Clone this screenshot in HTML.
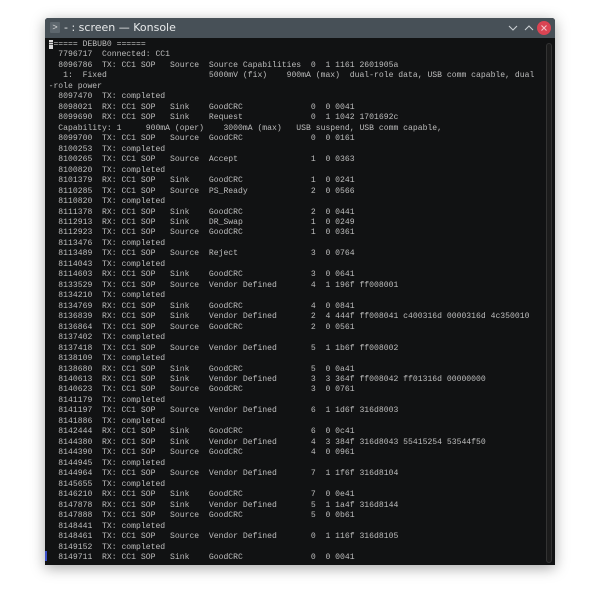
<!DOCTYPE html>
<html><head><meta charset="utf-8"><style>
html,body{margin:0;padding:0;width:600px;height:600px;background:#fff;overflow:hidden}
.win{position:absolute;left:45px;top:18px;width:510px;height:547px;background:#111213;box-shadow:0 3px 14px rgba(0,0,0,.35);border-radius:3px 3px 0 0;overflow:hidden}
.tb{position:absolute;left:0;top:0;width:510px;height:20px;background:#475057}
.ic{position:absolute;left:5px;top:4px;width:10px;height:11px;background:#5d666d;border-radius:1px;color:#ddd;font:9px "Liberation Sans",sans-serif;line-height:11px;text-align:center}
.tt{position:absolute;left:19px;top:3px;color:#e8eaeb;font:11px "DejaVu Sans","Liberation Sans",sans-serif;line-height:14px}
.cl{position:absolute;left:492px;top:3px;width:14px;height:14px;border-radius:50%;background:#da4453}
pre{position:absolute;left:3.6px;top:22px;margin:0;font:8.1px "Liberation Mono",monospace;line-height:10.47px;color:#bdbdbd}
.cur{background:#dcdcdc;color:#111}
.sb{position:absolute;left:501px;top:25px;width:4px;height:518px;border:1px solid #333;border-radius:3px;background:#1c1c1c}
.mk{position:absolute;left:0;top:533px;width:2px;height:10px;background:#3b50c8}
</style></head><body>
<div class="win">
<div class="tb">
<div class="ic">&gt;</div>
<div class="tt">- : screen — Konsole</div>
<svg style="position:absolute;left:463px;top:7px" width="10" height="6"><path d="M1 1 L5 5 L9 1" stroke="#c9ced2" stroke-width="1.1" fill="none"/></svg>
<svg style="position:absolute;left:479px;top:7px" width="10" height="6"><path d="M1 5 L5 1 L9 5" stroke="#c9ced2" stroke-width="1.1" fill="none"/></svg>
<div class="cl"><svg width="14" height="14"><path d="M4.5 4.5 L9.5 9.5 M9.5 4.5 L4.5 9.5" stroke="#f3c4ca" stroke-width="1.1"/></svg></div>
</div>
<div class="sb"></div>
<div class="mk"></div>
<pre><span class="cur">=</span>===== DEBUB0 ======
  7796717  Connected: CC1
  8096786  TX: CC1 SOP   Source  Source Capabilities  0  1 1161 2601905a
   1:  Fixed                     5000mV (fix)    900mA (max)  dual-role data, USB comm capable, dual
-role power
  8097470  TX: completed
  8098021  RX: CC1 SOP   Sink    GoodCRC              0  0 0041
  8099690  RX: CC1 SOP   Sink    Request              0  1 1042 1701692c
  Capability: 1     900mA (oper)    3000mA (max)   USB suspend, USB comm capable,
  8099700  TX: CC1 SOP   Source  GoodCRC              0  0 0161
  8100253  TX: completed
  8100265  TX: CC1 SOP   Source  Accept               1  0 0363
  8100820  TX: completed
  8101379  RX: CC1 SOP   Sink    GoodCRC              1  0 0241
  8110285  TX: CC1 SOP   Source  PS_Ready             2  0 0566
  8110820  TX: completed
  8111378  RX: CC1 SOP   Sink    GoodCRC              2  0 0441
  8112913  RX: CC1 SOP   Sink    DR_Swap              1  0 0249
  8112923  TX: CC1 SOP   Source  GoodCRC              1  0 0361
  8113476  TX: completed
  8113489  TX: CC1 SOP   Source  Reject               3  0 0764
  8114043  TX: completed
  8114603  RX: CC1 SOP   Sink    GoodCRC              3  0 0641
  8133529  TX: CC1 SOP   Source  Vendor Defined       4  1 196f ff008001
  8134210  TX: completed
  8134769  RX: CC1 SOP   Sink    GoodCRC              4  0 0841
  8136839  RX: CC1 SOP   Sink    Vendor Defined       2  4 444f ff008041 c400316d 0000316d 4c350010
  8136864  TX: CC1 SOP   Source  GoodCRC              2  0 0561
  8137402  TX: completed
  8137418  TX: CC1 SOP   Source  Vendor Defined       5  1 1b6f ff008002
  8138109  TX: completed
  8138680  RX: CC1 SOP   Sink    GoodCRC              5  0 0a41
  8140613  RX: CC1 SOP   Sink    Vendor Defined       3  3 364f ff008042 ff01316d 00000000
  8140623  TX: CC1 SOP   Source  GoodCRC              3  0 0761
  8141179  TX: completed
  8141197  TX: CC1 SOP   Source  Vendor Defined       6  1 1d6f 316d8003
  8141886  TX: completed
  8142444  RX: CC1 SOP   Sink    GoodCRC              6  0 0c41
  8144380  RX: CC1 SOP   Sink    Vendor Defined       4  3 384f 316d8043 55415254 53544f50
  8144390  TX: CC1 SOP   Source  GoodCRC              4  0 0961
  8144945  TX: completed
  8144964  TX: CC1 SOP   Source  Vendor Defined       7  1 1f6f 316d8104
  8145655  TX: completed
  8146210  RX: CC1 SOP   Sink    GoodCRC              7  0 0e41
  8147878  RX: CC1 SOP   Sink    Vendor Defined       5  1 1a4f 316d8144
  8147888  TX: CC1 SOP   Source  GoodCRC              5  0 0b61
  8148441  TX: completed
  8148461  TX: CC1 SOP   Source  Vendor Defined       0  1 116f 316d8105
  8149152  TX: completed
  8149711  RX: CC1 SOP   Sink    GoodCRC              0  0 0041</pre>
</div>
</body></html>
